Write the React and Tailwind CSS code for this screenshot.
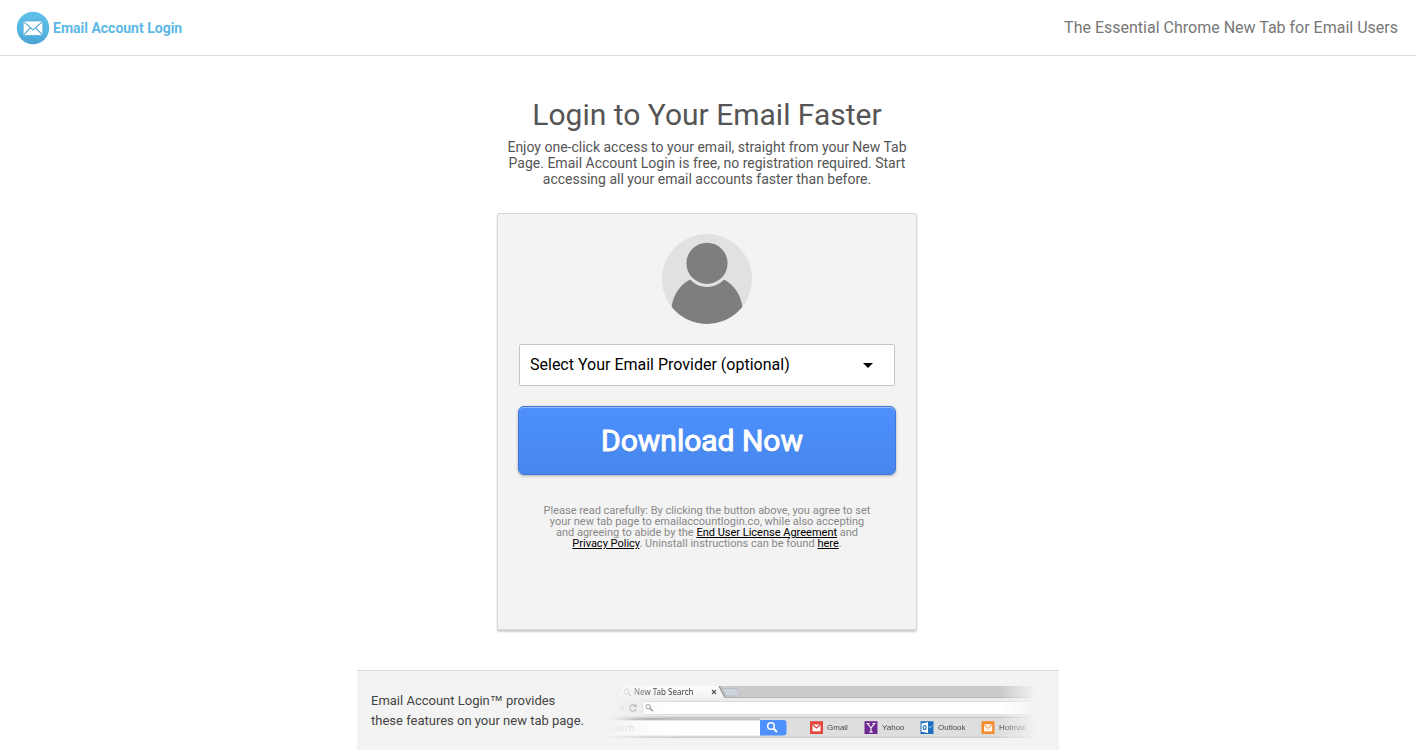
import { useState } from "react"

const providers = ["Gmail", "Yahoo", "Outlook", "Hotmail", "AOL"]

const LogoIcon = () => (
  <svg width="34" height="34" viewBox="0 0 34 34" aria-hidden="true">
    <defs>
      <linearGradient id="logo-fill" x1="0" y1="0" x2="0" y2="1">
        <stop offset="0" stopColor="#5fc0ea" />
        <stop offset="0.6" stopColor="#55b5e3" />
        <stop offset="1" stopColor="#4aa3d0" />
      </linearGradient>
    </defs>
    <circle cx="17" cy="17" r="16.2" fill="url(#logo-fill)" />
    <rect x="7.2" y="10" width="19.6" height="14.4" rx="0.8" fill="#fff" stroke="#3f9fd0" strokeWidth="0.6" />
    <path d="M7.6 10.6 L17 19 L26.4 10.6 M7.6 23.8 L14.2 17 M26.4 23.8 L19.8 17" fill="none" stroke="#55a9d4" strokeWidth="1.1" />
  </svg>
)

const Avatar = () => (
  <svg width="90" height="90" viewBox="0 0 90 90" role="img" aria-label="Account">
    <defs>
      <clipPath id="avatar-clip">
        <circle cx="45" cy="45" r="45" />
      </clipPath>
    </defs>
    <g clipPath="url(#avatar-clip)">
      <rect width="90" height="90" fill="#e1e1e1" />
      <path d="M9.5 73 C11.5 60 18 51 28 45.5 H62 C72 51 78.5 60 80.5 73 V90 H9.5 Z" fill="#7e7e7e" />
      <circle cx="45" cy="29.5" r="23.5" fill="#e1e1e1" />
      <circle cx="45" cy="29.3" r="20.6" fill="#7e7e7e" />
    </g>
  </svg>
)

// Browser window with the search box and the mail shortcuts, faded out at both sides
const TabPreview = () => (
  <svg width="440" height="54" viewBox="0 0 440 54" role="img" aria-label="New tab page" className="shrink-0">
    <defs>
      <linearGradient id="fade" x1="0" y1="0" x2="1" y2="0">
        <stop offset="0" stopColor="#000" />
        <stop offset="0.03" stopColor="#222" />
        <stop offset="0.12" stopColor="#ddd" />
        <stop offset="0.18" stopColor="#fff" />
        <stop offset="0.91" stopColor="#fff" />
        <stop offset="0.99" stopColor="#000" />
      </linearGradient>
      <linearGradient id="bar-shade" x1="0" y1="0" x2="1" y2="0">
        <stop offset="0.03" stopColor="#9a9a9a" stopOpacity="0" />
        <stop offset="0.2" stopColor="#9a9a9a" />
        <stop offset="0.5" stopColor="#c4c4c4" />
      </linearGradient>
      <linearGradient id="tab-fill" x1="0" y1="0" x2="0" y2="1">
        <stop offset="0" stopColor="#fdfdfd" />
        <stop offset="1" stopColor="#f0f0f0" />
      </linearGradient>
      <mask id="fade-mask">
        <rect width="440" height="54" fill="url(#fade)" />
      </mask>
    </defs>
    <g mask="url(#fade-mask)">
      <rect y="12" width="440" height="19" fill="#ececec" />
      <rect x="118" width="322" height="12" fill="#cbcbcb" />
      <path d="M124 11.5 H440" stroke="#b3b3b3" />
      <path d="M0 0 H119 L125 13 H0 Z" fill="url(#tab-fill)" />
      <path d="M119 0 L125 11.5" stroke="#999" strokeWidth="1.4" />
      <path d="M15 11 L21 1" stroke="#c8c8c8" />
      <path d="M122.5 2.5 H135.5 Q137 2.5 137.5 4 L140 9 Q140 10 139 10 H127.5 Q126 10 125.5 9 Z" fill="#ced4dc" stroke="#b4b7bd" strokeWidth="0.7" />
      <circle cx="26.5" cy="5.5" r="2.3" fill="none" stroke="#b4b4b4" />
      <path d="M28.2 7.2 L31 10" stroke="#b4b4b4" strokeWidth="1.3" />
      <text x="34" y="9" fontSize="8" fill="#3c3c3c" fontFamily="Noto Sans, sans-serif">New Tab Search</text>
      <path d="M112 4 L116 8 M116 4 L112 8" stroke="#555" strokeWidth="1.2" />
      <rect x="42.5" y="15.5" width="400" height="13" rx="1" fill="#fff" stroke="#dcdcdc" />
      <path d="M2 22 H9 M5 19 L2 22 L5 25 M17 22 H24 M21 19 L24 22 L21 25" fill="none" stroke="#b5b5b5" />
      <path d="M35.5 20 A3.2 3.2 0 1 0 36 23" fill="none" stroke="#8c8c8c" strokeWidth="1.3" />
      <path d="M36.7 17.7 V21.2 H33.2 Z" fill="#8c8c8c" />
      <circle cx="48.2" cy="20.7" r="2.2" fill="none" stroke="#858585" />
      <path d="M49.8 22.3 L53 25.3" stroke="#858585" strokeWidth="1.3" />
      <rect y="31" width="440" height="20.5" fill="#dedede" />
      <rect y="30.5" width="440" height="1.3" fill="#c4c4c4" />
      <rect y="32" width="160" height="2.5" fill="url(#bar-shade)" />
      <rect y="50.8" width="440" height="0.9" fill="#c4c4c4" />
      <rect y="34.5" width="160" height="15" fill="#fff" />
      <text x="6" y="45" fontSize="9" fill="#bdbdbd" fontFamily="Liberation Sans, sans-serif">Search</text>
      <path d="M160 34 H183.5 Q186.5 34 186.5 37 V46.5 Q186.5 49.5 183.5 49.5 H160 Z" fill="#4d90fe" />
      <circle cx="171" cy="40" r="3.3" fill="none" stroke="#fff" strokeWidth="1.5" />
      <path d="M173.5 42.5 L177 46" stroke="#fff" strokeWidth="2" />

      <rect x="210" y="35.2" width="13" height="12.8" fill="#e2463d" />
      <rect x="212.5" y="38.5" width="8" height="6.8" fill="#fff" />
      <path d="M212.5 38.5 L216.5 42 L220.5 38.5" fill="none" stroke="#e2463d" strokeWidth="1.3" />
      <rect x="264.5" y="35.2" width="13" height="12.8" fill="#6f2a92" />
      <path d="M267.5 37.7 L271 42 L274.5 37.7 M271 42 V46 M266.5 37.5 H269.5 M272.5 37.5 H275.5 M269.3 46 H272.7" fill="none" stroke="#fff" strokeWidth="1.1" />
      <rect x="320.5" y="35.2" width="13" height="12.8" fill="#1f6fc0" />
      <path d="M321.5 37.5 L328 36.2 V47 L321.5 45.7 Z" fill="#fff" />
      <ellipse cx="324.7" cy="41.6" rx="1.5" ry="2" fill="none" stroke="#1f6fc0" strokeWidth="1.2" />
      <path d="M328.5 40 L330 42 L332.8 39.5" fill="none" stroke="#9cc5ee" strokeWidth="0.9" />
      <rect x="381.5" y="35.2" width="13" height="12.8" fill="#f58a2c" />
      <rect x="384" y="38.2" width="8.2" height="7.2" fill="#fff6ec" />
      <path d="M384 38.5 L388.1 42.5 L392.2 38.5" fill="none" stroke="#f58a2c" strokeWidth="1" />
      <g fontSize="8" fill="#4a4a4a" fontFamily="Liberation Sans, sans-serif">
        <text x="227" y="44">Gmail</text>
        <text x="282" y="44">Yahoo</text>
        <text x="338" y="44">Outlook</text>
        <text x="399" y="44">Hotmail</text>
      </g>
    </g>
  </svg>
)

const App = () => {
  const [provider, setProvider] = useState("")

  return (
    <div className="flex min-h-screen flex-col bg-white font-[Roboto,sans-serif] text-[#555]">
      <header className="flex h-14 items-center justify-between border-b border-[#dedede] pr-[18px] pl-4">
        <a href="#" className="flex items-center gap-[3px] text-sm font-bold text-[#5cb9e6]">
          <LogoIcon />
          Email Account Login
        </a>
        <p className="text-base text-[#777]">The Essential Chrome New Tab for Email Users</p>
      </header>

      <main className="flex flex-1 flex-col items-center">
        <div className="flex w-full flex-col items-center pr-0.5">
          <h1 className="mt-[42px] text-3xl leading-[34px]">Login to Your Email Faster</h1>
          <p className="mt-[7px] w-[420px] max-w-full text-center text-sm leading-4">
            Enjoy one-click access to your email, straight from your New Tab Page. Email Account Login is free, no
            registration required. Start accessing all your email accounts faster than before.
          </p>

          <div className="mt-[26px] flex w-[420px] max-w-full flex-col items-center rounded-xs border border-[#d9d9d9] bg-[#f3f3f3] px-5 pt-5 pb-20 shadow-[0_2px_2px_rgba(0,0,0,0.2)]">
            <Avatar />
            <div className="relative mt-5 w-full px-px">
              <select
                aria-label="Email provider"
                value={provider}
                onChange={(e) => setProvider(e.target.value)}
                className="h-[42px] w-full appearance-none rounded-xs border border-[#c6c6c6] bg-white px-[10px] text-base text-black"
              >
                <option value="">Select Your Email Provider (optional)</option>
                {providers.map((name) => (
                  <option key={name} value={name}>
                    {name}
                  </option>
                ))}
              </select>
              <svg width="10" height="5" viewBox="0 0 10 5" className="pointer-events-none absolute top-[19px] right-[23px]" aria-hidden="true">
                <path d="M0 0 H10 L5 5 Z" fill="#000" />
              </svg>
            </div>
            <button
              type="button"
              className="mt-5 h-[69px] w-full rounded-md border border-[#3f78d8] bg-linear-to-b from-[#4d90fe] to-[#4787ed] pr-2.5 text-3xl text-white shadow-[inset_0_1px_0_rgba(255,255,255,0.4),0_1px_3px_rgba(0,0,0,0.3)] [-webkit-text-stroke:1px_white] text-shadow-[0_1px_1px_rgba(0,0,0,0.2)]"
            >
              Download Now
            </button>
            <p className="mt-[30px] w-[330px] max-w-full text-center text-[11px] leading-[11px] text-[#888]">
              Please read carefully: By clicking the button above, you agree to set your new tab page to
              emailaccountlogin.co, while also accepting and agreeing to abide by the{" "}
              <a href="#" className="text-black underline">End User License Agreement</a> and{" "}
              <a href="#" className="text-black underline">Privacy Policy</a>. Uninstall instructions can be found{" "}
              <a href="#" className="text-black underline">here</a>.
            </p>
          </div>
        </div>

        <section className="mt-10 flex w-[702px] max-w-full flex-1 items-start border-t border-[#d9d9d9] bg-[#f3f3f3] pt-[15px] pl-[14px]">
          <p className="mt-[5px] w-[229px] text-[13px] leading-5 text-[#444]">
            Email Account Login<span className="font-['Liberation_Sans',sans-serif]">™</span> provides
            <br />
            these features on your new tab page.
          </p>
          <TabPreview />
        </section>
      </main>
    </div>
  )
}

export default App
